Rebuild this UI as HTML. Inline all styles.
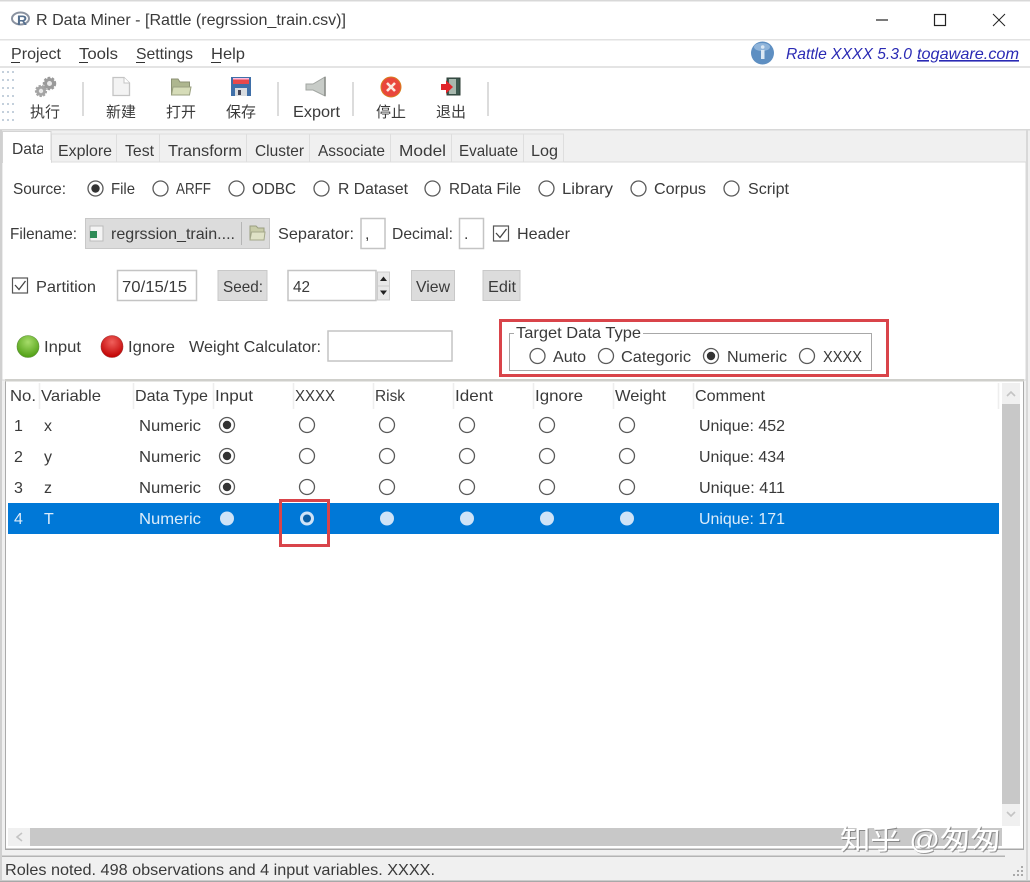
<!DOCTYPE html>
<html><head><meta charset="utf-8"><style>
html,body{margin:0;padding:0;background:#fff}
svg{display:block;filter:blur(.35px)}
text{font-family:"Liberation Sans","Noto Sans CJK SC",sans-serif;font-size:16px;fill:#3a3a3a}
.z{font-size:15px}
.r{fill:#fff;stroke:#5a5a5a;stroke-width:1.300}
.d{fill:#333}
.e{fill:#fff;stroke:#c4c4c4;stroke-width:1.500}
.b{fill:#dcdcdc;stroke:#c8c8c8;stroke-width:1}
</style></head><body>
<svg width="1030" height="882" viewBox="0 0 1030 882" xmlns="http://www.w3.org/2000/svg">
<rect width="1030" height="882" fill="#fff"/>
<rect width="1030" height="1.500" fill="#d8d8d8"/>
<!-- title -->
<ellipse cx="20.500" cy="18.500" rx="8.500" ry="6" fill="none" stroke="#8a92a0" stroke-width="2"/>
<text x="17" y="25" style="font-size:14px;font-weight:bold;fill:#56708f">R</text>
<text x="36" y="25" textLength="310" lengthAdjust="spacingAndGlyphs">R Data Miner - [Rattle (regrssion_train.csv)]</text>
<path d="M876 20H888" stroke="#222" stroke-width="1.200"/>
<rect x="934.500" y="14.500" width="11" height="11" fill="none" stroke="#222" stroke-width="1.200"/>
<path d="M993 14L1005 26M1005 14L993 26" stroke="#222" stroke-width="1"/>
<rect y="39" width="1030" height="1.500" fill="#e2e2e2"/>
<!-- menu -->
<text x="11" y="59" textLength="50" lengthAdjust="spacingAndGlyphs">Project</text>
<text x="79" y="59" textLength="39" lengthAdjust="spacingAndGlyphs">Tools</text>
<text x="136" y="59" textLength="57" lengthAdjust="spacingAndGlyphs">Settings</text>
<text x="211" y="59" textLength="34" lengthAdjust="spacingAndGlyphs">Help</text>
<path d="M11 62.500H20M79 62.500H88M136 62.500H145M211 62.500H221" stroke="#333" stroke-width="1"/>
<circle cx="762.500" cy="53" r="11.500" fill="#5e8fc2"/>
<ellipse cx="762" cy="47" rx="8" ry="4" fill="#8fb4da"/>
<rect x="761" y="50" width="3.500" height="9" fill="#dbe8f4"/><circle cx="762.700" cy="47" r="1.800" fill="#dbe8f4"/>
<text x="786" y="59" textLength="126" lengthAdjust="spacingAndGlyphs" style="font-style:italic;fill:#2a2ab4">Rattle XXXX 5.3.0</text>
<text x="917" y="59" textLength="102" lengthAdjust="spacingAndGlyphs" style="font-style:italic;fill:#2a2ab4;text-decoration:underline">togaware.com</text>
<rect y="66" width="1030" height="2" fill="#e4e4e4"/>
<!-- toolbar -->
<g fill="#c4d0dc"><rect x="2" y="71" width="2" height="2"/><rect x="7" y="71" width="2" height="2"/><rect x="12" y="71" width="2" height="2"/><rect x="2" y="79" width="2" height="2"/><rect x="7" y="79" width="2" height="2"/><rect x="12" y="79" width="2" height="2"/><rect x="2" y="87" width="2" height="2"/><rect x="7" y="87" width="2" height="2"/><rect x="12" y="87" width="2" height="2"/><rect x="2" y="95" width="2" height="2"/><rect x="7" y="95" width="2" height="2"/><rect x="12" y="95" width="2" height="2"/><rect x="2" y="103" width="2" height="2"/><rect x="7" y="103" width="2" height="2"/><rect x="12" y="103" width="2" height="2"/><rect x="2" y="111" width="2" height="2"/><rect x="7" y="111" width="2" height="2"/><rect x="12" y="111" width="2" height="2"/><rect x="2" y="119" width="2" height="2"/><rect x="7" y="119" width="2" height="2"/><rect x="12" y="119" width="2" height="2"/></g>
<!-- gears -->
<circle cx="49.500" cy="83.500" r="5.500" fill="#9a9a9a" stroke="#9a9a9a" stroke-width="2.500" stroke-dasharray="2.500 1.500"/>
<circle cx="49.500" cy="83.500" r="2.500" fill="#e8e8e8"/>
<circle cx="41" cy="91" r="5" fill="#a4a4a4" stroke="#a4a4a4" stroke-width="2.200" stroke-dasharray="2.200 1.300"/>
<circle cx="41" cy="91" r="2.200" fill="#e8e8e8"/>
<!-- new -->
<path d="M113 77.500H124L129.500 83V95.500H113Z" fill="#f3f3f3" stroke="#c4c4c4" stroke-width="1.300"/>
<path d="M124 77.500V83H129.500" fill="#fff" stroke="#c4c4c4"/>
<!-- open -->
<path d="M171.500 79H178L180 82H189.500V94.500H171.500Z" fill="#aeb68f" stroke="#8c9274"/>
<path d="M171.500 95L173 87H191L189.500 95Z" fill="#d6dcb8" stroke="#9aa080"/>
<!-- save -->
<rect x="231" y="77" width="20" height="19" fill="#3f6fa8"/>
<rect x="233" y="78" width="16" height="6" fill="#e8484a"/>
<rect x="233" y="78" width="16" height="1.500" fill="#fbd"/>
<rect x="235" y="88" width="12" height="8" fill="#d8dce0"/>
<rect x="238" y="90" width="3" height="5" fill="#445"/>
<!-- export -->
<path d="M306 84H313L325 77V96L313 90H306Z" fill="#c8ccc8" stroke="#a2a6a2"/>
<path d="M325 77V96" stroke="#8a8e89" stroke-width="1.600"/>
<!-- stop -->
<circle cx="391" cy="87" r="10" fill="#e9463c" stroke="#d8801e" stroke-width="1"/>
<path d="M387 83L395 91M395 83L387 91" stroke="#fbe8e0" stroke-width="2.600"/>
<!-- exit -->
<rect x="447" y="78" width="13" height="17" fill="#3e5a50" stroke="#2c3d36"/>
<path d="M449 79H456V94H449Z" fill="#a8b8ae"/>
<path d="M441 84H446V80.500L453 87L446 93.500V90H441Z" fill="#e0252a"/>
<g stroke="#d4d4d4" stroke-width="1.600"><path d="M83 82V116M278 82V116M353 82V116M488 82V116"/></g>
<text class="z" x="30" y="117" textLength="30" lengthAdjust="spacingAndGlyphs">执行</text>
<text class="z" x="106" y="117" textLength="30" lengthAdjust="spacingAndGlyphs">新建</text>
<text class="z" x="166" y="117" textLength="30" lengthAdjust="spacingAndGlyphs">打开</text>
<text class="z" x="226" y="117" textLength="30" lengthAdjust="spacingAndGlyphs">保存</text>
<text x="293" y="117" textLength="47" lengthAdjust="spacingAndGlyphs">Export</text>
<text class="z" x="376" y="117" textLength="30" lengthAdjust="spacingAndGlyphs">停止</text>
<text class="z" x="436" y="117" textLength="30" lengthAdjust="spacingAndGlyphs">退出</text>
<!-- tab strip -->
<rect y="129" width="1030" height="753" fill="#f0f0f0"/>
<rect y="129" width="1030" height="1.500" fill="#d8d8d8"/>
<rect x="2" y="162" width="1024" height="218" fill="#fff" stroke="#d8d8d8"/>
<g fill="#f0f0f0" stroke="#dedede"><rect x="51.500" y="134" width="65" height="28"/><rect x="116.500" y="134" width="43" height="28"/><rect x="159.500" y="134" width="87" height="28"/><rect x="246.500" y="134" width="63" height="28"/><rect x="309.500" y="134" width="81" height="28"/><rect x="390.500" y="134" width="61" height="28"/><rect x="451.500" y="134" width="72" height="28"/><rect x="523.500" y="134" width="40" height="28"/></g>
<path d="M2.500 163V131.500H51V163" fill="#fff" stroke="#d4d4d4"/>
<rect x="3" y="160" width="48" height="4" fill="#fff"/>
<text x="12" y="154" textLength="33" lengthAdjust="spacingAndGlyphs">Data</text>
<rect x="43" y="140" width="7.500" height="18" fill="#fff"/>
<text x="58" y="156" textLength="54" lengthAdjust="spacingAndGlyphs">Explore</text>
<text x="125" y="156" textLength="29" lengthAdjust="spacingAndGlyphs">Test</text>
<text x="168" y="156" textLength="74" lengthAdjust="spacingAndGlyphs">Transform</text>
<text x="255" y="156" textLength="49" lengthAdjust="spacingAndGlyphs">Cluster</text>
<text x="318" y="156" textLength="67" lengthAdjust="spacingAndGlyphs">Associate</text>
<text x="399" y="156" textLength="47" lengthAdjust="spacingAndGlyphs">Model</text>
<text x="459" y="156" textLength="59" lengthAdjust="spacingAndGlyphs">Evaluate</text>
<text x="531" y="156" textLength="27" lengthAdjust="spacingAndGlyphs">Log</text>
<!-- source -->
<text x="13" y="194" textLength="53" lengthAdjust="spacingAndGlyphs">Source:</text>
<circle class="r" cx="95.500" cy="188.500" r="7.500"/><circle class="d" cx="95.500" cy="188.500" r="4.200"/>
<circle class="r" cx="160.500" cy="188.500" r="7.500"/><circle class="r" cx="236.500" cy="188.500" r="7.500"/><circle class="r" cx="321.500" cy="188.500" r="7.500"/><circle class="r" cx="432.500" cy="188.500" r="7.500"/><circle class="r" cx="546.500" cy="188.500" r="7.500"/><circle class="r" cx="638.500" cy="188.500" r="7.500"/><circle class="r" cx="731.500" cy="188.500" r="7.500"/>
<text x="111" y="194" textLength="24" lengthAdjust="spacingAndGlyphs">File</text>
<text x="176" y="194" textLength="35" lengthAdjust="spacingAndGlyphs">ARFF</text>
<text x="252" y="194" textLength="44" lengthAdjust="spacingAndGlyphs">ODBC</text>
<text x="338" y="194" textLength="70" lengthAdjust="spacingAndGlyphs">R Dataset</text>
<text x="449" y="194" textLength="72" lengthAdjust="spacingAndGlyphs">RData File</text>
<text x="562" y="194" textLength="51" lengthAdjust="spacingAndGlyphs">Library</text>
<text x="654" y="194" textLength="52" lengthAdjust="spacingAndGlyphs">Corpus</text>
<text x="748" y="194" textLength="41" lengthAdjust="spacingAndGlyphs">Script</text>
<!-- filename -->
<text x="10" y="239" textLength="67" lengthAdjust="spacingAndGlyphs">Filename:</text>
<rect class="b" x="85.500" y="218.500" width="184" height="30"/>
<path d="M90 226H103V241H90Z" fill="#f4f4f4" stroke="#bbb"/><rect x="90" y="231" width="7" height="7" fill="#2e8b57"/>
<text x="111" y="239" textLength="124" lengthAdjust="spacingAndGlyphs">regrssion_train....</text>
<path d="M241.500 222V245" stroke="#b5b5b5"/>
<path d="M250 226H256L258 228H264V240H250Z" fill="#c8cca8" stroke="#9a9e80"/><path d="M250 240L251.500 232H265L264 240Z" fill="#dfe2c6" stroke="#a4a88a"/>
<text x="278" y="239" textLength="76" lengthAdjust="spacingAndGlyphs">Separator:</text>
<rect class="e" x="361" y="218.500" width="24" height="30"/>
<text x="365" y="239">,</text>
<text x="392" y="239" textLength="61" lengthAdjust="spacingAndGlyphs">Decimal:</text>
<rect class="e" x="459.500" y="218.500" width="24" height="30"/>
<text x="464" y="239">.</text>
<rect x="493.500" y="226" width="15" height="15" fill="#fff" stroke="#555" stroke-width="1.200"/>
<path d="M496 233L500 237.500L506.500 229" fill="none" stroke="#444" stroke-width="1.300"/>
<text x="517" y="239" textLength="53" lengthAdjust="spacingAndGlyphs">Header</text>
<!-- partition -->
<rect x="12.500" y="278" width="15" height="15" fill="#fff" stroke="#555" stroke-width="1.200"/>
<path d="M15 285L19 289.500L25.500 281" fill="none" stroke="#444" stroke-width="1.300"/>
<text x="36" y="292" textLength="60" lengthAdjust="spacingAndGlyphs">Partition</text>
<rect class="e" x="117.500" y="270.500" width="79" height="30"/>
<text x="122" y="292" textLength="65" lengthAdjust="spacingAndGlyphs">70/15/15</text>
<rect class="b" x="218" y="270.500" width="49" height="30"/>
<text x="223" y="292" textLength="40" lengthAdjust="spacingAndGlyphs">Seed:</text>
<rect class="e" x="288" y="270.500" width="88" height="30"/>
<text x="293" y="292" textLength="17" lengthAdjust="spacingAndGlyphs">42</text>
<rect x="377.500" y="272" width="12" height="14" fill="#e8e8e8" stroke="#ccc"/><rect x="377.500" y="286" width="12" height="14" fill="#e8e8e8" stroke="#ccc"/>
<path d="M380 281L383.500 276.500L387 281ZM380 290.500L383.500 295L387 290.500Z" fill="#222"/>
<rect class="b" x="411.500" y="270.500" width="43" height="30"/>
<text x="416" y="292" textLength="34" lengthAdjust="spacingAndGlyphs">View</text>
<rect class="b" x="483" y="270.500" width="37" height="30"/>
<text x="488" y="292" textLength="28" lengthAdjust="spacingAndGlyphs">Edit</text>
<!-- input/ignore -->
<defs>
<radialGradient id="g" cx=".5" cy=".3" r=".7"><stop offset="0" stop-color="#a6dc6a"/><stop offset="1" stop-color="#4e9e12"/></radialGradient>
<radialGradient id="o" cx=".5" cy=".3" r=".7"><stop offset="0" stop-color="#f0605c"/><stop offset="1" stop-color="#c00000"/></radialGradient>
</defs>
<circle cx="28" cy="346.500" r="11" fill="url(#g)" stroke="#5d8f3a" stroke-width=".6"/>
<text x="44" y="352" textLength="37" lengthAdjust="spacingAndGlyphs">Input</text>
<circle cx="112" cy="346.500" r="11" fill="url(#o)" stroke="#a03030" stroke-width=".6"/>
<text x="128" y="352" textLength="47" lengthAdjust="spacingAndGlyphs">Ignore</text>
<text x="189" y="352" textLength="132" lengthAdjust="spacingAndGlyphs">Weight Calculator:</text>
<rect class="e" x="328" y="331" width="124" height="30"/>
<!-- target -->
<rect x="509.500" y="333.500" width="362" height="37" fill="#fff" stroke="#a8a8a8"/>
<rect x="514" y="326" width="129" height="14" fill="#fff"/>
<text x="516" y="338" textLength="125" lengthAdjust="spacingAndGlyphs">Target Data Type</text>
<circle class="r" cx="537.500" cy="356" r="7.500"/><circle class="r" cx="606" cy="356" r="7.500"/><circle class="r" cx="711" cy="356" r="7.500"/><circle class="d" cx="711" cy="356" r="4.200"/><circle class="r" cx="807" cy="356" r="7.500"/>
<text x="553" y="362" textLength="33" lengthAdjust="spacingAndGlyphs">Auto</text>
<text x="621" y="362" textLength="70" lengthAdjust="spacingAndGlyphs">Categoric</text>
<text x="727" y="362" textLength="60" lengthAdjust="spacingAndGlyphs">Numeric</text>
<text x="823" y="362" textLength="39" lengthAdjust="spacingAndGlyphs">XXXX</text>
<rect x="500.500" y="320.500" width="387" height="55" fill="none" stroke="#d9444a" stroke-width="3"/>
<!-- table -->
<rect x="5.500" y="380" width="1018" height="469" fill="#fff" stroke="#aaa"/>
<rect x="5" y="379" width="1019" height="2.500" fill="#cfcfcb"/>
<path d="M39.500 383V409M133.500 383V409M213.500 383V409M293.500 383V409M373.500 383V409M453.500 383V409M533.500 383V409M613.500 383V409M693.500 383V409M998.500 383V409" stroke="#eeeeee" stroke-width="1.500"/>
<text x="10" y="401" textLength="26" lengthAdjust="spacingAndGlyphs">No.</text>
<text x="41" y="401" textLength="60" lengthAdjust="spacingAndGlyphs">Variable</text>
<text x="135" y="401" textLength="73" lengthAdjust="spacingAndGlyphs">Data Type</text>
<text x="215" y="401" textLength="38" lengthAdjust="spacingAndGlyphs">Input</text>
<text x="295" y="401" textLength="40" lengthAdjust="spacingAndGlyphs">XXXX</text>
<text x="375" y="401" textLength="30" lengthAdjust="spacingAndGlyphs">Risk</text>
<text x="455" y="401" textLength="38" lengthAdjust="spacingAndGlyphs">Ident</text>
<text x="535" y="401" textLength="48" lengthAdjust="spacingAndGlyphs">Ignore</text>
<text x="615" y="401" textLength="51" lengthAdjust="spacingAndGlyphs">Weight</text>
<text x="695" y="401" textLength="70" lengthAdjust="spacingAndGlyphs">Comment</text>
<!-- rows -->
<text x="14" y="431">1</text><text x="44" y="431">x</text><text x="139" y="431" textLength="62" lengthAdjust="spacingAndGlyphs">Numeric</text><text x="699" y="431" textLength="86" lengthAdjust="spacingAndGlyphs">Unique: 452</text>
<text x="14" y="462">2</text><text x="44" y="462">y</text><text x="139" y="462" textLength="62" lengthAdjust="spacingAndGlyphs">Numeric</text><text x="699" y="462" textLength="86" lengthAdjust="spacingAndGlyphs">Unique: 434</text>
<text x="14" y="493">3</text><text x="44" y="493">z</text><text x="139" y="493" textLength="62" lengthAdjust="spacingAndGlyphs">Numeric</text><text x="699" y="493" textLength="86" lengthAdjust="spacingAndGlyphs">Unique: 411</text>
<circle class="r" cx="227" cy="425" r="7.500"/><circle class="d" cx="227" cy="425" r="4.200"/>
<circle class="r" cx="227" cy="456" r="7.500"/><circle class="d" cx="227" cy="456" r="4.200"/>
<circle class="r" cx="227" cy="487" r="7.500"/><circle class="d" cx="227" cy="487" r="4.200"/>
<circle class="r" cx="307" cy="425" r="7.500"/><circle class="r" cx="387" cy="425" r="7.500"/><circle class="r" cx="467" cy="425" r="7.500"/><circle class="r" cx="547" cy="425" r="7.500"/><circle class="r" cx="627" cy="425" r="7.500"/>
<circle class="r" cx="307" cy="456" r="7.500"/><circle class="r" cx="387" cy="456" r="7.500"/><circle class="r" cx="467" cy="456" r="7.500"/><circle class="r" cx="547" cy="456" r="7.500"/><circle class="r" cx="627" cy="456" r="7.500"/>
<circle class="r" cx="307" cy="487" r="7.500"/><circle class="r" cx="387" cy="487" r="7.500"/><circle class="r" cx="467" cy="487" r="7.500"/><circle class="r" cx="547" cy="487" r="7.500"/><circle class="r" cx="627" cy="487" r="7.500"/>
<rect x="8" y="503" width="991" height="31" fill="#0078d7"/>
<text x="14" y="524" style="fill:#dcecfa">4</text><text x="44" y="524" style="fill:#dcecfa">T</text><text x="139" y="524" textLength="62" lengthAdjust="spacingAndGlyphs" style="fill:#dcecfa">Numeric</text><text x="699" y="524" textLength="86" lengthAdjust="spacingAndGlyphs" style="fill:#dcecfa">Unique: 171</text>
<circle cx="227" cy="518.500" r="7" fill="#cfe3f7"/><circle cx="387" cy="518.500" r="7" fill="#cfe3f7"/><circle cx="467" cy="518.500" r="7" fill="#cfe3f7"/><circle cx="547" cy="518.500" r="7" fill="#cfe3f7"/><circle cx="627" cy="518.500" r="7" fill="#cfe3f7"/>
<circle cx="307" cy="518.500" r="7" fill="#cfe3f7"/><circle cx="307" cy="518.500" r="4" fill="#0a5fa6"/>
<rect x="280.500" y="500.500" width="48" height="45" fill="none" stroke="#d9444a" stroke-width="3"/>
<!-- scrollbars -->
<rect x="1002" y="383" width="18" height="22" fill="#f0f0f0"/>
<rect x="1002" y="404" width="18" height="400" fill="#c8c8c8"/>
<rect x="1002" y="804" width="18" height="22" fill="#f0f0f0"/>
<path d="M1007 396L1011 392L1015 396M1007 812L1011 816L1015 812" fill="none" stroke="#c4c4c4" stroke-width="1.600"/>
<rect x="8" y="828" width="22" height="18" fill="#f0f0f0"/>
<rect x="30" y="828" width="972" height="18" fill="#c8c8c8"/>
<path d="M22 833L17 837L22 841" fill="none" stroke="#c4c4c4" stroke-width="1.600"/>
<!-- status -->
<rect x="0" y="849.500" width="1030" height="32" fill="#f0f0f0"/>
<rect x="5" y="848.500" width="1019" height="1.500" fill="#a8a8a8"/>
<rect x="0" y="855.500" width="1005" height="1.500" fill="#b4b4b4"/>
<rect x="0" y="880.500" width="1030" height="1.500" fill="#a8a8a8"/>
<rect x="0" y="130" width="2" height="750" fill="#d0d0d0"/>
<rect x="1026" y="130" width="2" height="750" fill="#d8d8d8"/>
<text x="5" y="875" textLength="430" lengthAdjust="spacingAndGlyphs">Roles noted. 498 observations and 4 input variables. XXXX.</text>
<g fill="#aaa"><rect x="1021" y="866" width="2" height="2"/><rect x="1017" y="870" width="2" height="2"/><rect x="1021" y="870" width="2" height="2"/><rect x="1013" y="874" width="2" height="2"/><rect x="1017" y="874" width="2" height="2"/><rect x="1021" y="874" width="2" height="2"/></g>
<!-- watermark -->
<text x="841" y="850" textLength="161" lengthAdjust="spacingAndGlyphs" style="font-size:28px;fill:#555;opacity:.55">知乎 @匆匆</text>
<text x="840" y="849" textLength="161" lengthAdjust="spacingAndGlyphs" style="font-size:28px;fill:#fff">知乎 @匆匆</text>
</svg>
</body></html>
